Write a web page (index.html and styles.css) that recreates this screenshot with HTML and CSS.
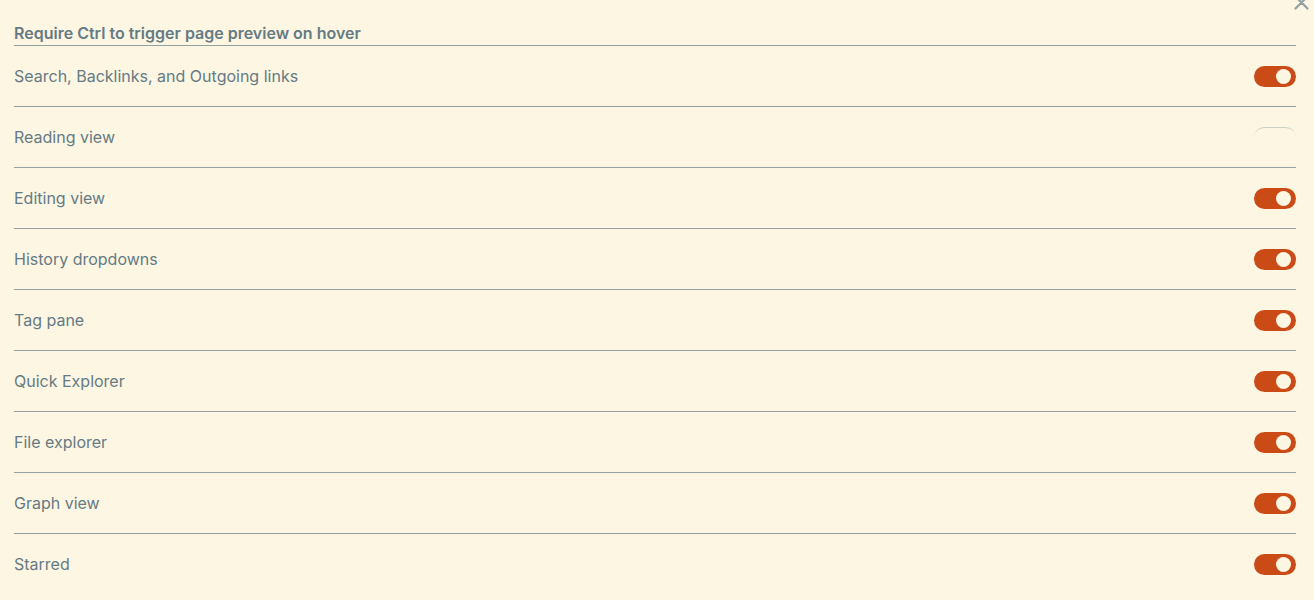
FILE: index.html
```html
<!DOCTYPE html>
<html lang="en">
<head>
    <meta charset="UTF-8">
    <title>Page preview</title>
    <link rel="stylesheet" href="styles.css">
</head>
<body>
    <div class="modal">
        <span class="close-btn">
            <svg width="15" height="15" viewBox="0 0 15 15"><path d="M1.5 1.5 L13.5 13.5 M13.5 1.5 L1.5 13.5" stroke="#93a1a1" stroke-width="2.2" stroke-linecap="round"/></svg>
        </span>
        <div class="settings">
            <h3 class="setting-heading">Require Ctrl to trigger page preview on hover</h3>
            <div class="setting-item">
                <span>Search, Backlinks, and Outgoing links</span>
                <div class="toggle on"></div>
            </div>
            <div class="setting-item">
                <span>Reading view</span>
                <div class="toggle"></div>
            </div>
            <div class="setting-item">
                <span>Editing view</span>
                <div class="toggle on"></div>
            </div>
            <div class="setting-item">
                <span>History dropdowns</span>
                <div class="toggle on"></div>
            </div>
            <div class="setting-item">
                <span>Tag pane</span>
                <div class="toggle on"></div>
            </div>
            <div class="setting-item">
                <span>Quick Explorer</span>
                <div class="toggle on"></div>
            </div>
            <div class="setting-item">
                <span>File explorer</span>
                <div class="toggle on"></div>
            </div>
            <div class="setting-item">
                <span>Graph view</span>
                <div class="toggle on"></div>
            </div>
            <div class="setting-item">
                <span>Starred</span>
                <div class="toggle on"></div>
            </div>
        </div>
    </div>
</body>
</html>
```

FILE: styles.css
```css
body {
    background-color: #fdf6e3;
    color: #657b83;
    font-family: Inter, "Noto Sans", sans-serif;
    margin: 0;
    padding: 0;
    overflow: hidden;
}
.modal {
    position: relative;
    height: 600px;
}
.close-btn {
    position: absolute;
    top: -5px;
    right: 5px;
    width: 15px;
    height: 15px;
}
.close-btn svg {
    display: block;
}
.settings {
    padding: 0 18px 0 14px;
}
.setting-heading {
    margin: 0;
    padding: 24px 0 3px;
    font-size: 16px;
    font-weight: 600;
    line-height: 18px;
    border-bottom: 1px solid #93a1a1;
}
.setting-item {
    display: flex;
    align-items: center;
    justify-content: space-between;
    height: 60px;
    font-size: 16px;
    border-bottom: 1px solid #93a1a1;
}
.setting-item:last-child {
    border-bottom: none;
}
.toggle {
    position: relative;
    width: 42px;
    height: 21px;
    border-radius: 11px;
    box-sizing: border-box;
    border-top: 1px solid #c9d2c4;
}
.toggle.on {
    background-color: #cb4b16;
    border-top: none;
}
.toggle.on::after {
    content: "";
    position: absolute;
    top: 3px;
    right: 5px;
    width: 15px;
    height: 15px;
    border-radius: 50%;
    background-color: #fdf6e3;
}
```
